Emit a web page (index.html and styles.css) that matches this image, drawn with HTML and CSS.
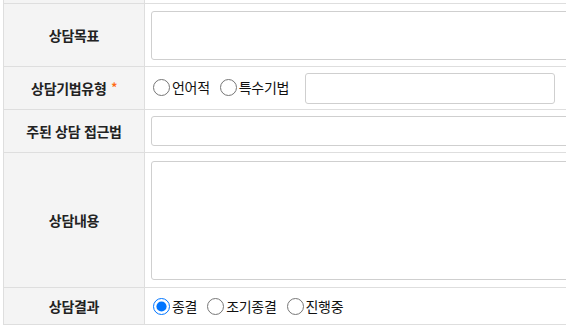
FILE: index.html
```html
<!DOCTYPE html>
<html lang="ko">
<head>
<meta charset="utf-8">
<title>상담 기록</title>
<link rel="stylesheet" href="styles.css">
</head>
<body>
<div class="wrap">
<table class="form-table">
  <colgroup><col class="col-label"><col class="col-value"></colgroup>
  <tr class="row-prev"><th></th><td></td></tr>
  <tr class="row-goal">
    <th>상담목표</th>
    <td><input type="text" class="field field-goal"></td>
  </tr>
  <tr class="row-tech">
    <th>상담기법유형 <span class="req">*</span></th>
    <td>
      <div class="radios">
        <label class="opt"><input type="radio" name="tech">언어적</label>
        <label class="opt"><input type="radio" name="tech">특수기법</label>
        <input type="text" class="field field-etc">
      </div>
    </td>
  </tr>
  <tr class="row-approach">
    <th>주된 상담 접근법</th>
    <td><input type="text" class="field field-approach"></td>
  </tr>
  <tr class="row-content">
    <th>상담내용</th>
    <td><textarea class="field field-content"></textarea></td>
  </tr>
  <tr class="row-result">
    <th>상담결과</th>
    <td>
      <div class="radios">
        <label class="opt"><input type="radio" name="result" checked>종결</label>
        <label class="opt"><input type="radio" name="result">조기종결</label>
        <label class="opt"><input type="radio" name="result">진행중</label>
      </div>
    </td>
  </tr>
</table>
</div>
</body>
</html>
```

FILE: styles.css
```css
html, body {
  margin: 0;
  padding: 0;
  background: #fff;
  overflow: hidden;
}
body {
  width: 566px;
  height: 332px;
  font-family: "Noto Sans CJK KR", "Noto Sans", sans-serif;
  font-size: 14px;
  letter-spacing: -0.3px;
  color: #111;
}
.wrap {
  padding-left: 3px;
  margin-top: -17px;
}
.form-table {
  border-collapse: collapse;
  width: 640px;
  table-layout: fixed;
}
.col-label { width: 141px; }
.form-table th,
.form-table td {
  border: 1px solid #dedede;
  padding: 0 6px;
  vertical-align: middle;
}
.form-table th {
  background: #f4f4f4;
  font-weight: 700;
  color: #222;
  text-align: center;
  white-space: nowrap;
}
.row-prev th, .row-prev td { height: 19px; }
.row-goal th, .row-goal td { height: 62px; }
.row-tech th, .row-tech td { height: 42px; }
.row-approach th, .row-approach td { height: 42px; }
.row-content th, .row-content td { height: 134px; }
.row-result th, .row-result td { height: 36px; }
.form-table tr > * { box-sizing: content-box; }
.req {
  color: #ff6a13;
  font-size: 12px;
  vertical-align: 2px;
  margin-left: 1px;
}
.field {
  display: block;
  box-sizing: border-box;
  border: 1px solid #cfcfcf;
  border-radius: 3px;
  background: #fff;
  margin: 0;
  padding: 0 6px;
  font: inherit;
}
.field-goal { width: 100%; height: 49px; }
.field-approach { width: 100%; height: 30px; }
.field-content { width: 100%; height: 119px; resize: none; }
.field-etc { width: 250px; height: 31px; margin-left: 8px; }
.radios {
  display: flex;
  align-items: center;
}
.opt {
  display: flex;
  align-items: center;
  margin-right: 8px;
  line-height: 16px;
}
.opt input {
  width: 17px;
  height: 17px;
  margin: 0 2px 0 2px;
}
.row-tech .opt { margin-top: -2px; }
```
